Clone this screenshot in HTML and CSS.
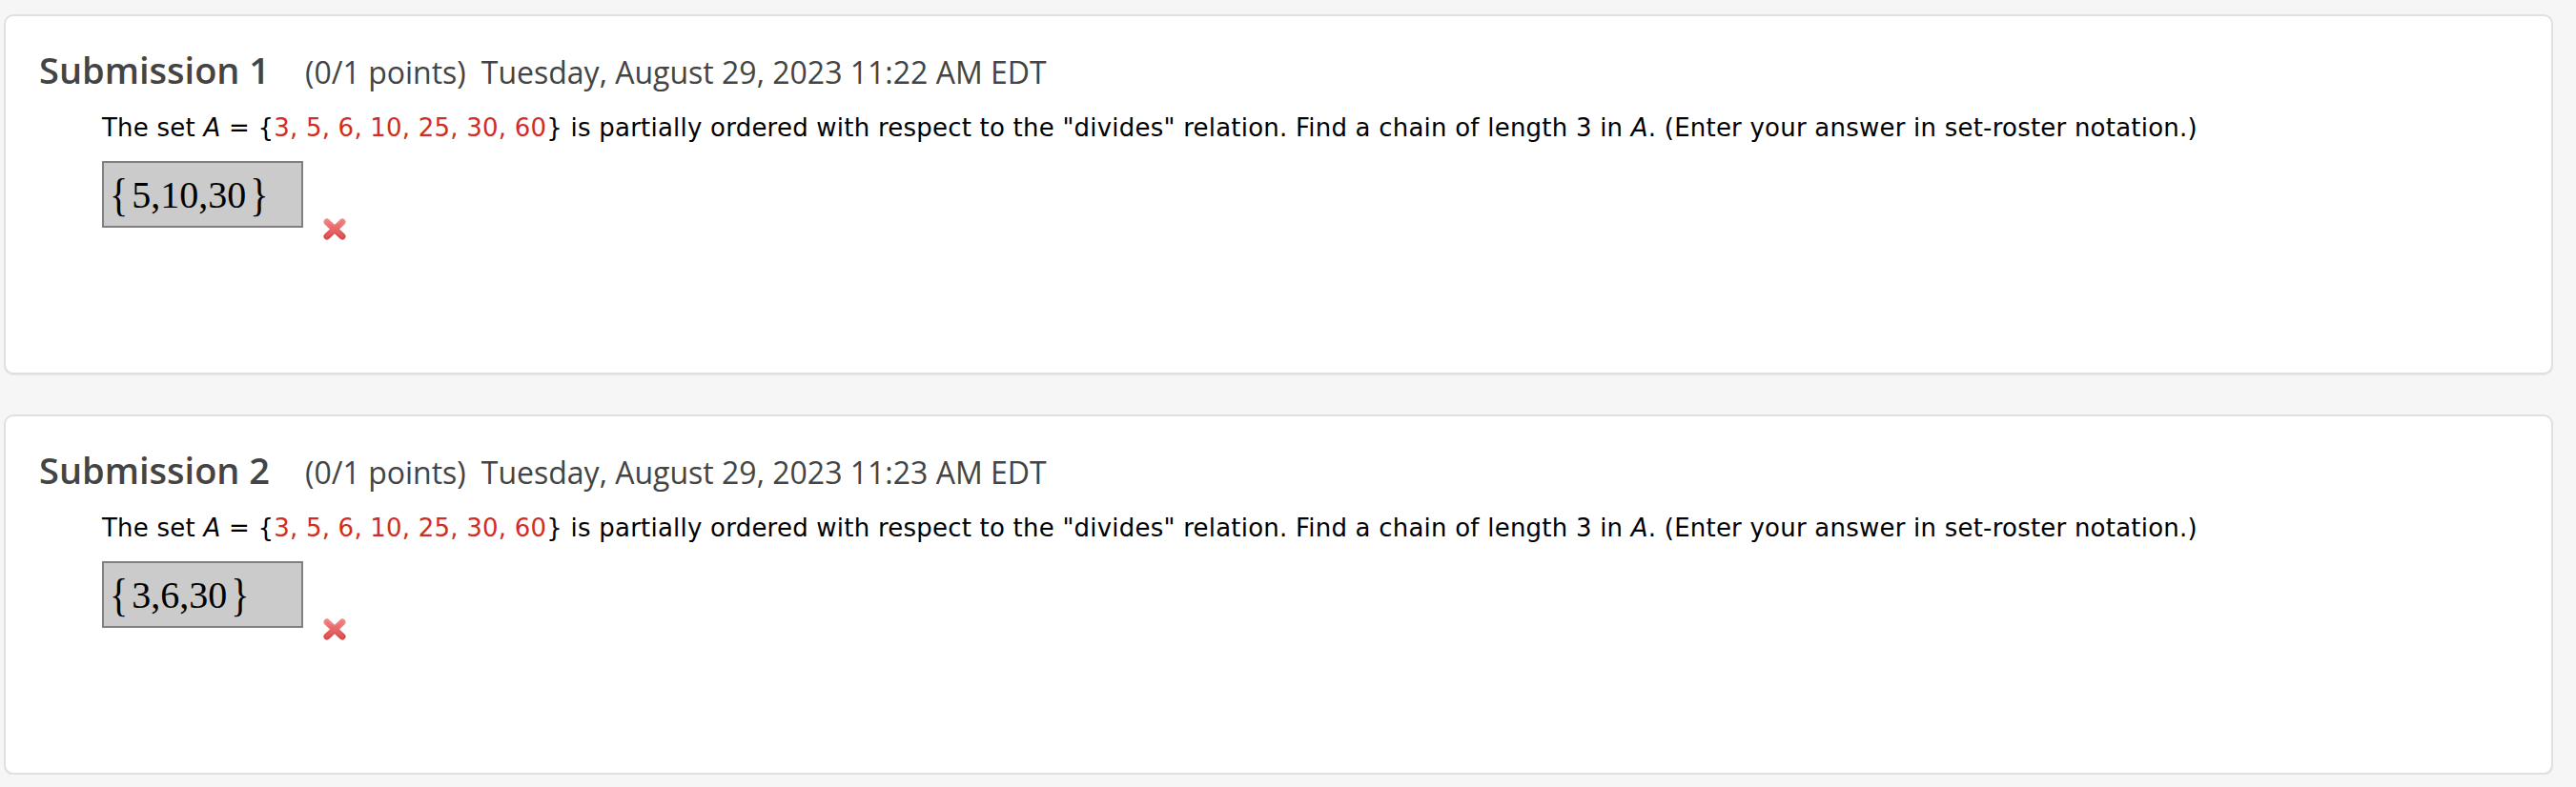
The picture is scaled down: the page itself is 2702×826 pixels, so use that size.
FILE: index.html
```html
<!DOCTYPE html>
<html lang="en">
<head>
<meta charset="utf-8">
<title>Submissions</title>
<link rel="stylesheet" href="styles.css">
</head>
<body>
<main class="submissions">
  <section class="card">
    <h3 class="sub-title">
      <span class="sub-name">Submission 1</span>
      <span class="sub-points">(0/1 points)</span>
      <span class="sub-date">Tuesday, August 29, 2023 11:22 AM EDT</span>
    </h3>
    <div class="question">
      <p class="prompt">The set <i>A</i> = {<span class="red">3, 5, 6, 10, 25, 30, 60</span>} is partially ordered with respect to the "divides" relation. Find a chain of length 3 in <i>A</i>. (Enter your answer in set-roster notation.)</p>
      <div class="answer-row">
        <div class="answer-box"><span class="brace">{</span><span class="math">5,10,30</span><span class="brace">}</span></div>
        <svg class="mark" width="28" height="27" viewBox="0 0 28 27" aria-label="incorrect">
          <defs>
            <linearGradient id="xg1" x1="0" y1="0" x2="0" y2="1">
              <stop offset="0" stop-color="#f08a8a"/>
              <stop offset="1" stop-color="#d94848"/>
            </linearGradient>
          </defs>
          <path d="M6 6 L22 21 M22 6 L6 21" stroke="url(#xg1)" stroke-width="7" stroke-linecap="round" fill="none"/>
          <path d="M6 6 L22 21 M22 6 L6 21" stroke="#e66" stroke-width="3" stroke-linecap="round" fill="none" opacity="0.5"/>
        </svg>
      </div>
    </div>
  </section>

  <section class="card">
    <h3 class="sub-title">
      <span class="sub-name">Submission 2</span>
      <span class="sub-points">(0/1 points)</span>
      <span class="sub-date">Tuesday, August 29, 2023 11:23 AM EDT</span>
    </h3>
    <div class="question">
      <p class="prompt">The set <i>A</i> = {<span class="red">3, 5, 6, 10, 25, 30, 60</span>} is partially ordered with respect to the "divides" relation. Find a chain of length 3 in <i>A</i>. (Enter your answer in set-roster notation.)</p>
      <div class="answer-row">
        <div class="answer-box"><span class="brace">{</span><span class="math">3,6,30</span><span class="brace">}</span></div>
        <svg class="mark" width="28" height="27" viewBox="0 0 28 27" aria-label="incorrect">
          <defs>
            <linearGradient id="xg2" x1="0" y1="0" x2="0" y2="1">
              <stop offset="0" stop-color="#f08a8a"/>
              <stop offset="1" stop-color="#d94848"/>
            </linearGradient>
          </defs>
          <path d="M6 6 L22 21 M22 6 L6 21" stroke="url(#xg2)" stroke-width="7" stroke-linecap="round" fill="none"/>
          <path d="M6 6 L22 21 M22 6 L6 21" stroke="#e66" stroke-width="3" stroke-linecap="round" fill="none" opacity="0.5"/>
        </svg>
      </div>
    </div>
  </section>
</main>
</body>
</html>
```
FILE: styles.css
```css
html, body {
  margin: 0;
  padding: 0;
}
body {
  background: #f6f6f6;
  font-family: "Open Sans", "Liberation Sans", sans-serif;
}
.submissions {
  padding: 15px 24px 0 4px;
  display: flex;
  flex-direction: column;
  gap: 42px;
}
.card {
  background: #fff;
  border: 2px solid #e0e0e0;
  border-radius: 10px;
  box-shadow: 0 1px 0 #e6e6e6;
  height: 378px;
  box-sizing: border-box;
  padding: 32px 36px 0 35px;
}
.sub-title {
  margin: 0;
  display: flex;
  align-items: baseline;
  line-height: 48px;
  color: #444;
  font-weight: 400;
}
.sub-name {
  font-size: 38px;
  font-weight: 600;
  margin-right: 37px;
}
.sub-points {
  font-size: 32px;
  margin-right: 16px;
}
.sub-date {
  font-size: 32px;
}
.question {
  padding-left: 66px;
}
.prompt {
  margin: 18px 0 0 0;
  font-family: "DejaVu Sans", Verdana, sans-serif;
  font-size: 26px;
  letter-spacing: 0.22px;
  line-height: 32px;
  color: #000;
}
.red {
  color: #d12d24;
}
.answer-row {
  display: flex;
  align-items: flex-start;
  margin-top: 19px;
}
.answer-box {
  width: 211px;
  height: 70px;
  box-sizing: border-box;
  background: #cbcbcb;
  border: 2px solid #808080;
  padding-left: 6px;
  display: flex;
  align-items: center;
  font-family: "Liberation Serif", "Times New Roman", serif;
  font-size: 40px;
  color: #000;
}
.brace {
  display: inline-block;
  transform: scaleY(1.2);
}
.math {
  padding: 0 4px;
}
.mark {
  margin-left: 19px;
  margin-top: 58px;
}
```
